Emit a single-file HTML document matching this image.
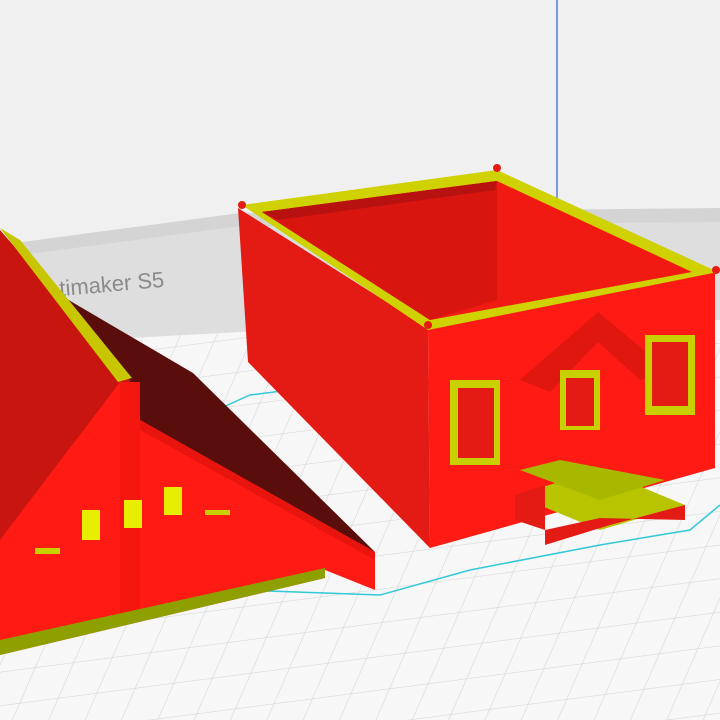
<!DOCTYPE html><html><head><style>html,body{margin:0;padding:0;width:720px;height:720px;overflow:hidden;background:#f2f2f2}</style></head><body>
<svg width="720" height="720" viewBox="0 0 720 720" xmlns="http://www.w3.org/2000/svg">
<defs>
<pattern id="grid" width="36" height="36" patternUnits="userSpaceOnUse" patternTransform="skewX(-30) rotate(-8)">
<rect width="36" height="36" fill="#f7f7f7"/><path d="M36 0V36H0" fill="none" stroke="#d6d6d6" stroke-width="1.2"/></pattern>
</defs>
<rect width="720" height="720" fill="#f0f0f0"/>
<line x1="557" y1="0" x2="557" y2="215" stroke="#4a7fe0" stroke-width="1.5"/>
<polygon points="15,243 240,213 720,208 720,720 0,720 0,246" fill="#d4d4d4"/>
<polygon points="15,256 240,226 720,222 720,720 0,720" fill="#dedede"/>
<polygon points="0,345 240,332 720,320 720,720 0,720" fill="url(#grid)"/>
<text x="60" y="296" font-family="Liberation Sans, sans-serif" font-size="22" fill="#8a8a8a" transform="rotate(-5 60 296)">timaker S5</text>
<polyline points="150,440 250,395 330,385 420,360" fill="none" stroke="#31c8d8" stroke-width="1.5"/>
<polyline points="240,590 380,595 470,570 600,545 690,530 720,505" fill="none" stroke="#31c8d8" stroke-width="1.5"/>
<!-- house box -->
<polygon points="238,208 428,328 430,548 248,362" fill="#e41b14"/>
<polygon points="428,328 715,272 715,468 430,548" fill="#ff1a14"/>
<polygon points="242,205 497,170 718,272 428,330" fill="#cfd100"/>
<polygon points="262,212 497,181 692,272 430,320" fill="#f01a12"/>
<polygon points="262,212 497,181 497,300 430,320" fill="#d8150f"/>
<polygon points="262,212 497,181 495,190 278,220" fill="#b81210"/>
<circle cx="242" cy="205" r="4" fill="#e41b14"/><circle cx="497" cy="168" r="4" fill="#e41b14"/><circle cx="428" cy="325" r="4" fill="#e41b14"/><circle cx="716" cy="270" r="4" fill="#e41b14"/>
<!-- porch -->
<polygon points="520,380 598,312 668,370 640,380 598,342 550,392" fill="#e0170f"/>
<rect x="450" y="380" width="50" height="85" fill="#c8d000"/><rect x="458" y="388" width="36" height="70" fill="#e41b14"/>
<rect x="560" y="370" width="40" height="60" fill="#c8d000"/><rect x="566" y="378" width="28" height="48" fill="#e41b14"/>
<rect x="645" y="335" width="50" height="80" fill="#c8d000"/><rect x="652" y="342" width="36" height="64" fill="#e41b14"/>
<polygon points="515,495 600,470 685,505 600,530" fill="#b8c400"/>
<polygon points="515,495 545,485 545,530 515,520" fill="#e41b14"/>
<polygon points="545,530 600,518 685,520 685,505 610,525 545,545" fill="#e41b14"/>
<polygon points="520,470 560,460 665,480 600,500" fill="#a8b800"/>
<!-- roof piece -->
<polygon points="55,292 193,373 375,552 375,560 140,420 125,380" fill="#5a0e0c"/>
<polygon points="0,230 130,380 130,395 0,545" fill="#c8150f"/>
<polygon points="0,228 20,240 132,378 118,382" fill="#c8c600"/>
<polygon points="120,382 140,382 140,420 375,552 375,590 325,570 325,578 0,655 0,540" fill="#ff1a14"/>
<polygon points="140,420 375,552 375,560 140,430" fill="#e8150e"/>
<rect x="120" y="382" width="20" height="230" fill="#f4160f"/>
<polygon points="0,640 325,568 325,578 0,655" fill="#8ea000"/>
<polygon points="82,510 100,510 100,540 82,540" fill="#e8ee00"/>
<polygon points="124,500 142,500 142,528 124,528" fill="#e8ee00"/>
<polygon points="164,487 182,487 182,515 164,515" fill="#e8ee00"/>
<rect x="35" y="548" width="25" height="6" fill="#c8d000"/><rect x="205" y="510" width="25" height="5" fill="#c8d000"/>
</svg></body></html>
